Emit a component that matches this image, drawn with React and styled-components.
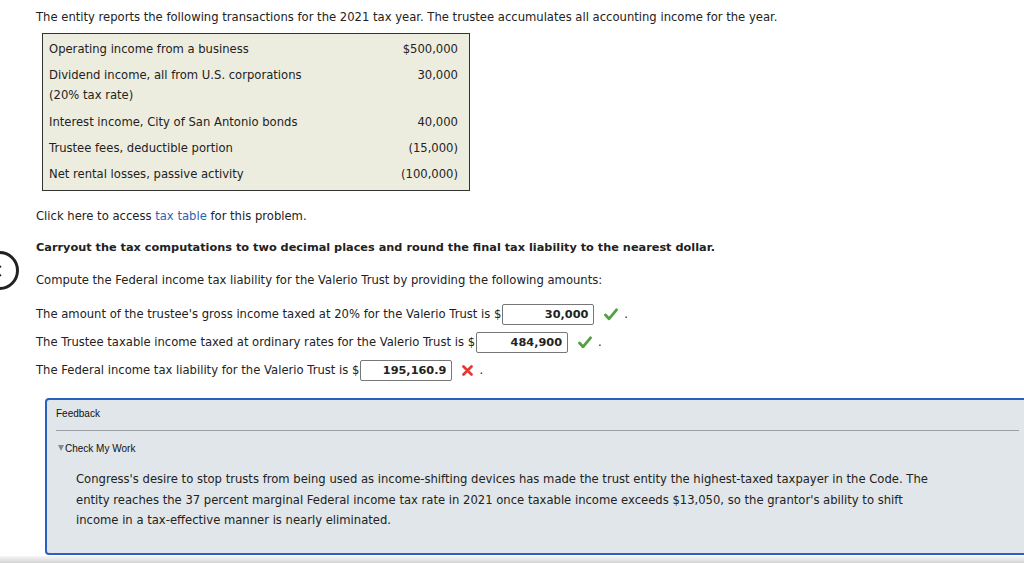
import React from "react";
import styled, { createGlobalStyle } from "styled-components";

const Global = createGlobalStyle`
  html, body { margin: 0; padding: 0; background: #fff; }
  body { font-family: "DejaVu Sans", Verdana, sans-serif; font-size: 11.6px; color: #222; overflow: hidden; }
`;

const Page = styled.div`
  position: relative;
  width: 1024px;
  height: 563px;
  overflow: hidden;
  box-sizing: border-box;
  padding: 10px 0 0 36px;
`;

const NavCircle = styled.div`
  position: absolute;
  left: -20px;
  top: 251px;
  width: 33px;
  height: 33px;
  border: 3px solid #222;
  border-radius: 50%;
  display: flex;
  align-items: center;
  justify-content: center;
`;

const ChevronWrap = styled.span`
  display: inline-flex;
  margin-right: 4px;
`;

const Para = styled.p`
  margin: 0;
  line-height: 14px;
  font-weight: ${(p) => (p.$bold ? "bold" : "normal")};
  font-size: ${(p) => (p.$bold ? "11.3px" : "inherit")};
  margin-top: ${(p) => p.$mt || 0}px;
`;

const Link = styled.span`
  color: #2a63b5;
`;

const DataTable = styled.div`
  margin: 9px 0 0 6px;
  width: 428px;
  box-sizing: border-box;
  border: 1px solid #333;
  background: #ededdf;
  padding: 8px 11px 9px 6px;
  display: flex;
  flex-direction: column;
  gap: 12px;
`;

const DataRow = styled.div`
  display: flex;
  justify-content: space-between;
  align-items: flex-start;
  line-height: 14px;
  padding-bottom: ${(p) => (p.$tall ? 1 : 0)}px;
`;

const Label = styled.div``;

const SubLine = styled.div`
  margin-top: ${(p) => (p.$first ? 0 : 6)}px;
`;

const Amount = styled.div`
  text-align: right;
`;

const AnswerRow = styled.div`
  display: flex;
  align-items: center;
  height: 20px;
  margin-top: ${(p) => p.$mt || 8}px;
`;

const Input = styled.div`
  width: 92px;
  height: 21px;
  box-sizing: border-box;
  border: 1px solid #777;
  border-radius: 2px;
  background: #fff;
  font-weight: bold;
  font-size: 11.3px;
  text-align: right;
  padding-right: 5px;
  line-height: 19px;
  margin-left: 1px;
`;

const Mark = styled.span`
  display: inline-flex;
  margin-left: 10px;
`;

const Dot = styled.span`
  margin-left: 6px;
`;

const Feedback = styled.div`
  margin: 18px 0 0 9px;
  width: 1000px;
  height: 157px;
  box-sizing: border-box;
  border: 2px solid #2a5fc4;
  border-radius: 4px 0 0 4px;
  background: #e0e6e9;
  padding: 8px 0 0 9px;
  font-family: "Liberation Sans", Arial, sans-serif;
  font-size: 10px;
  color: #111;
`;

const FbTitle = styled.div`
  line-height: 12px;
`;

const Rule = styled.div`
  margin-top: 10px;
  width: 963px;
  height: 1px;
  background: #9aa0a4;
`;

const Toggle = styled.div`
  margin-top: 12px;
  line-height: 12px;
  display: flex;
  align-items: center;
  padding-left: 2px;
`;

const Tri = styled.span`
  display: inline-block;
  width: 0;
  height: 0;
  border-left: 3px solid transparent;
  border-right: 3px solid transparent;
  border-top: 6px solid #888;
  margin-right: 1px;
  margin-top: -3px;
`;

const FbText = styled.p`
  margin: 14px 0 0 20px;
  width: 866px;
  font-family: "DejaVu Sans", Verdana, sans-serif;
  font-size: 11.6px;
  line-height: 20.5px;
  color: #222;
`;

const BottomBar = styled.div`
  position: absolute;
  left: 0;
  right: 0;
  bottom: 0;
  height: 7px;
  background: linear-gradient(#f6f6f6, #d4d4d4);
`;

const Check = () => (
  <svg width="14" height="13" viewBox="0 0 14 13">
    <path d="M1.5 7 L5 10.8 L12.5 1.8" fill="none" stroke="#52a043" strokeWidth="2.8" strokeLinecap="round" strokeLinejoin="round" />
  </svg>
);

const Cross = () => (
  <svg width="11" height="11" viewBox="0 0 11 11">
    <path d="M1.5 1.5 L9.5 9.5 M9.5 1.5 L1.5 9.5" stroke="#e53935" strokeWidth="2.7" strokeLinecap="round" />
  </svg>
);

const Chevron = () => (
  <svg width="10" height="14" viewBox="0 0 10 14">
    <path d="M8 2 L3 7 L8 12" fill="none" stroke="#222" strokeWidth="1.6" />
  </svg>
);

const rows = [
  [["Operating income from a business"], "$500,000"],
  [["Dividend income, all from U.S. corporations", "(20% tax rate)"], "30,000"],
  [["Interest income, City of San Antonio bonds"], "40,000"],
  [["Trustee fees, deductible portion"], "(15,000)"],
  [["Net rental losses, passive activity"], "(100,000)"],
];

export default function App() {
  return (
    <Page>
      <Global />
      <NavCircle>
        <ChevronWrap>
          <Chevron />
        </ChevronWrap>
      </NavCircle>
      <Para>
        The entity reports the following transactions for the 2021 tax year. The trustee accumulates all accounting income for the year.
      </Para>
      <DataTable>
        {rows.map(([lines, a], i) => (
          <DataRow key={i} $tall={lines.length > 1}>
            <Label>
              {lines.map((s, j) => (
                <SubLine key={j} $first={j === 0}>{s}</SubLine>
              ))}
            </Label>
            <Amount>{a}</Amount>
          </DataRow>
        ))}
      </DataTable>
      <Para $mt={18}>
        Click here to access <Link>tax table</Link> for this problem.
      </Para>
      <Para $bold $mt={18}>
        Carryout the tax computations to two decimal places and round the final tax liability to the nearest dollar.
      </Para>
      <Para $mt={18}>
        Compute the Federal income tax liability for the Valerio Trust by providing the following amounts:
      </Para>
      <AnswerRow $mt={17}>
        The amount of the trustee's gross income taxed at 20% for the Valerio Trust is $
        <Input>30,000</Input>
        <Mark><Check /></Mark>
        <Dot>.</Dot>
      </AnswerRow>
      <AnswerRow>
        The Trustee taxable income taxed at ordinary rates for the Valerio Trust is $
        <Input>484,900</Input>
        <Mark><Check /></Mark>
        <Dot>.</Dot>
      </AnswerRow>
      <AnswerRow>
        The Federal income tax liability for the Valerio Trust is $
        <Input>195,160.9</Input>
        <Mark><Cross /></Mark>
        <Dot>.</Dot>
      </AnswerRow>
      <Feedback>
        <FbTitle>Feedback</FbTitle>
        <Rule />
        <Toggle>
          <Tri />
          Check My Work
        </Toggle>
        <FbText>
          Congress's desire to stop trusts from being used as income-shifting devices has made the trust entity the highest-taxed taxpayer in the Code. The entity reaches the 37 percent marginal Federal income tax rate in 2021 once taxable income exceeds $13,050, so the grantor's ability to shift income in a tax-effective manner is nearly eliminated.
        </FbText>
      </Feedback>
      <BottomBar />
    </Page>
  );
}
